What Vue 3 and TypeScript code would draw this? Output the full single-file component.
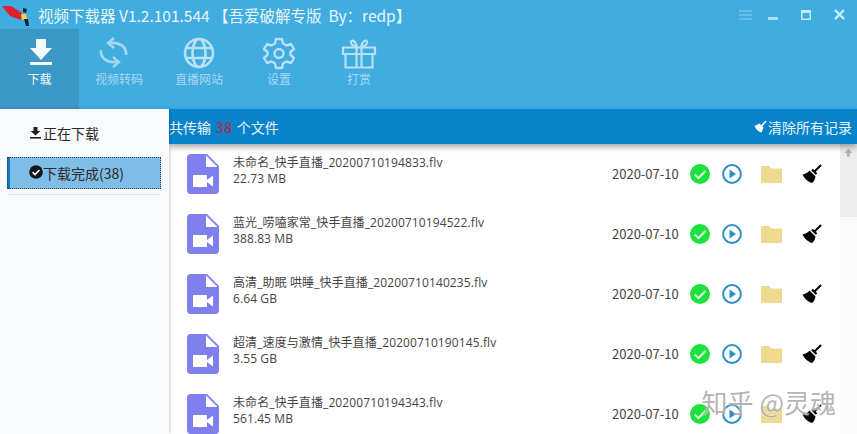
<script setup lang="ts">
interface FileRow {
  name: string;
  size: string;
  date: string;
}

const navItems = [
  { label: '下载', icon: 'download', active: true },
  { label: '视频转码', icon: 'convert', active: false },
  { label: '直播网站', icon: 'globe', active: false },
  { label: '设置', icon: 'gear', active: false },
  { label: '打赏', icon: 'gift', active: false },
];

const files: FileRow[] = [
  { name: '未命名_快手直播_20200710194833.flv', size: '22.73 MB', date: '2020-07-10' },
  { name: '蓝光_唠嗑家常_快手直播_20200710194522.flv', size: '388.83 MB', date: '2020-07-10' },
  { name: '高清_助眠 哄睡_快手直播_20200710140235.flv', size: '6.64 GB', date: '2020-07-10' },
  { name: '超清_速度与激情_快手直播_20200710190145.flv', size: '3.55 GB', date: '2020-07-10' },
  { name: '未命名_快手直播_20200710194343.flv', size: '561.45 MB', date: '2020-07-10' },
];
</script>

<template>
  <div class="app">
    <header class="titlebar">
      <svg class="logo" width="30" height="26" viewBox="0 0 30 26">
        <path d="M1 4 L10 4 L21 11 L20 18 L9 14 Z" fill="#e0202c" />
        <path d="M20 12 L25 12 L26 17 L21 18 Z" fill="#f4d33a" />
        <path d="M23 17 L27 17 L28 24 L25 24 Z" fill="#15213a" />
        <path d="M22 6 L26 7 L25 11 L22 10 Z" fill="#15213a" />
      </svg>
      <span class="title">视频下载器 V1.2.101.544 【吾爱破解专版&nbsp; By：redp】</span>
      <div class="win-btns">
        <svg class="win-menu" width="13" height="10" viewBox="0 0 13 10"><path d="M0 1H13M0 5H13M0 9H13" stroke="#8fd0ec" stroke-width="1.2" /></svg>
        <svg class="win-min" width="10" height="3" viewBox="0 0 10 3"><rect width="10" height="3" fill="#a6e0f5" /></svg>
        <svg width="10" height="10" viewBox="0 0 10 10"><path d="M.75 .75H9.25V9.25H.75Z" fill="none" stroke="#bdf0fb" stroke-width="1.5" /><path d="M0 0H10V3H0Z" fill="#bdf0fb" /></svg>
        <svg width="11" height="11" viewBox="0 0 11 11"><path d="M1 1L10 10M10 1L1 10" stroke="#c7f1fb" stroke-width="2.4" /></svg>
      </div>
    </header>

    <nav class="nav">
      <div v-for="item in navItems" :key="item.label" class="nav-item" :class="{ active: item.active }">
        <svg v-if="item.icon === 'download'" class="nav-icon" width="34" height="34" viewBox="0 0 34 34">
          <path d="M13 2H23V11H29L18 23L7 11H13Z" fill="#f3fafd" />
          <rect x="7" y="25" width="22" height="3" fill="#f3fafd" />
        </svg>
        <svg v-else-if="item.icon === 'convert'" class="nav-icon nav-convert" width="34" height="34" viewBox="0 0 34 34" fill="none" stroke="#a5d8f0" stroke-width="2.6">
          <path d="M14 6C24 5 31 10 30 18" />
          <path d="M18 1L12 6L18 11" stroke-width="2.4" />
          <path d="M21 25C11 26 4 21 5 13" />
          <path d="M17 20L23 25L17 30" stroke-width="2.4" />
        </svg>
        <svg v-else-if="item.icon === 'globe'" class="nav-icon" width="34" height="34" viewBox="0 0 34 34" fill="none" stroke="#b9e0f3" stroke-width="2.6">
          <circle cx="17" cy="16" r="14" />
          <ellipse cx="17" cy="16" rx="6.5" ry="14" />
          <path d="M4 11H30M4 21H30" />
        </svg>
        <svg v-else-if="item.icon === 'gear'" class="nav-icon" width="34" height="34" viewBox="0 0 34 34" fill="none" stroke="#b9e0f3" stroke-width="2.4" stroke-linejoin="round">
          <path d="M14 2H20L21 6.5L24.5 8.5L29 7L32 12L28.5 15V18L32 21L29 26L24.5 24.5L21 26.5L20 31H14L13 26.5L9.5 24.5L5 26L2 21L5.5 18V15L2 12L5 7L9.5 8.5L13 6.5Z" />
          <circle cx="17" cy="16.5" r="4.5" />
        </svg>
        <svg v-else class="nav-icon" width="36" height="34" viewBox="0 0 36 34" fill="none" stroke="#b9e0f3" stroke-width="2.2">
          <path d="M2 10.5H34V17H2Z" />
          <path d="M4.5 17V30.5H31.5V17" />
          <path d="M15.5 10.5V30.5M20.5 10.5V30.5" />
          <path d="M16 10C12 9 9 7 10 4.5C11.5 2 15 5 16 10Z" />
          <path d="M20 10C24 9 27 7 26 4.5C24.5 2 21 5 20 10Z" />
        </svg>
        <span class="nav-label">{{ item.label }}</span>
      </div>
    </nav>

    <div class="body">
      <aside class="sidebar">
        <div class="side-item">
          <svg width="11" height="12" viewBox="0 0 11 12"><path d="M3.5 0H7.5V4H10.5L5.5 8.5L.5 4H3.5Z" fill="#222" /><rect y="10" width="11" height="1.6" fill="#222" /></svg>
          <span>正在下载</span>
        </div>
        <div class="side-item selected">
          <svg class="done-icon" width="14" height="14" viewBox="0 0 14 14"><circle cx="7" cy="7" r="6.8" fill="#16161e" /><path d="M3.6 7.2L6 9.5L10.4 5" fill="none" stroke="#fff" stroke-width="1.6" /></svg>
          <span>下载完成(38)</span>
        </div>
      </aside>

      <main class="main">
        <div class="summary">
          <span class="summary-text">共传输 <b class="count">38</b> 个文件</span>
          <span class="clear-all">
            <svg width="14" height="14" viewBox="0 0 14 14"><path d="M13 1L8.5 6" stroke="#fff" stroke-width="1.6" /><path d="M6.5 3.5L10.5 7.5L8.5 12.5C6 12 2.5 9 1.5 6Z" fill="#fff" /></svg>
            清除所有记录
          </span>
        </div>

        <div class="content">
          <div class="list">
            <div v-for="file in files" :key="file.name" class="row">
              <svg class="file-icon" width="32" height="40" viewBox="0 0 32 40">
                <path d="M4 0H20L32 12V36A4 4 0 0 1 28 40H4A4 4 0 0 1 0 36V4A4 4 0 0 1 4 0Z" fill="#7f80ee" />
                <path d="M19 1.5L30.5 13H19Z" fill="#fff" />
                <path d="M6 21H20V33H6Z" fill="#fff" />
                <path d="M20 26L26 21.5V32.5L20 28Z" fill="#fff" />
              </svg>
              <div class="file-text">
                <div class="file-name">{{ file.name }}</div>
                <div class="file-size">{{ file.size }}</div>
              </div>
              <span class="file-date">{{ file.date }}</span>
              <svg class="act-check" width="20" height="20" viewBox="0 0 20 20">
                <circle cx="10" cy="10" r="10" fill="#1de13c" />
                <path d="M4.5 10.5L8.5 14L15.5 7" fill="none" stroke="#d6f7dc" stroke-width="2.2" />
              </svg>
              <svg class="act-play" width="20" height="20" viewBox="0 0 20 20">
                <circle cx="10" cy="10" r="8.9" fill="#fff" stroke="#2f8fc4" stroke-width="2" />
                <path d="M7.5 5.5L14 10L7.5 14.5Z" fill="#2f8fc4" />
              </svg>
              <svg class="act-folder" width="21" height="17" viewBox="0 0 21 17">
                <path d="M1 0H8L10 2.5H20A1 1 0 0 1 21 3.5V16A1 1 0 0 1 20 17H1A1 1 0 0 1 0 16V1A1 1 0 0 1 1 0Z" fill="#efd98e" />
              </svg>
              <svg class="act-broom" width="20" height="20" viewBox="0 0 20 20">
                <path d="M19 1L12.5 7.5" stroke="#000" stroke-width="2" />
                <path d="M10 5.5L14.5 10" stroke="#000" stroke-width="2.2" />
                <path d="M7.5 6.5L13.5 12.5C13 16 11 18.5 10 19C6 18 2 14 .5 10.5C3 10 6 8.5 7.5 6.5Z" fill="#000" />
              </svg>
            </div>
          </div>
          <div class="scrollbar">
            <div class="thumb">
              <svg width="9" height="9" viewBox="0 0 9 9"><path d="M4.5 0.5L8.5 5H6V8.5H3V5H.5Z" fill="#b4b4b4" /></svg>
            </div>
          </div>
          <div class="watermark">知乎 @灵魂</div>
        </div>
      </main>
    </div>
  </div>
</template>

<style>
html,
body {
  margin: 0;
  overflow: hidden;
}
</style>

<style scoped>
.app {
  width: 857px;
  height: 434px;
  overflow: hidden;
  display: flex;
  flex-direction: column;
  background: #fff;
  font-family: "Noto Sans CJK SC", "Noto Sans", sans-serif;
}

.titlebar {
  height: 29px;
  flex: none;
  display: flex;
  align-items: center;
  padding-left: 1px;
  background: #40ace0;
  color: #e9f6fb;
}

.logo {
  flex: none;
}

.title {
  margin-left: 7px;
  font-size: 15.5px;
  white-space: nowrap;
}

.win-btns {
  margin-left: auto;
  display: flex;
  align-items: center;
  gap: 23px;
  padding-right: 12px;
}

.win-menu {
  margin-right: -7px;
}

.win-min {
  margin-top: 7px;
}

.nav {
  height: 80px;
  flex: none;
  display: flex;
  background: #40ace0;
}

.nav-item {
  width: 80px;
  display: flex;
  flex-direction: column;
  align-items: center;
  padding-top: 8px;
  color: #a9d9f1;
  font-size: 12px;
  box-sizing: border-box;
}

.nav-item.active {
  width: 79px;
  background: #3a97c6;
  color: #f3fafd;
}

.nav-icon {
  display: block;
}

.nav-convert {
  margin-right: 12px;
}

.nav-label {
  margin-top: -1px;
  line-height: 18px;
  white-space: nowrap;
}

.body {
  flex: 1;
  min-height: 0;
  display: flex;
}

.sidebar {
  width: 169px;
  flex: none;
  background: #f9fafc;
  box-shadow: 1px 0 3px rgba(0, 0, 0, 0.2);
  position: relative;
  z-index: 2;
  font-size: 14px;
  color: #2a2a2a;
  padding-top: 12px;
  box-sizing: border-box;
}

.side-item {
  display: flex;
  align-items: center;
  gap: 2px;
  height: 24px;
  padding-left: 30px;
  white-space: nowrap;
}

.side-item.selected {
  box-sizing: border-box;
  width: 154px;
  height: 32px;
  margin: 12px 0 0 7px;
  padding-left: 19px;
  gap: 0;
  background: #7fbde6;
  border-left: 3px solid #0a78c8;
  outline: 1px dotted #24435c;
  outline-offset: -1px;
  box-shadow: 0 5px 0 #f9fafc, 0 6px 0 #e2e4e8;
}

.done-icon {
  margin-top: -3px;
}

.main {
  flex: 1;
  min-width: 0;
  display: flex;
  flex-direction: column;
}

.summary {
  height: 35px;
  flex: none;
  display: flex;
  align-items: center;
  justify-content: space-between;
  padding-right: 5px;
  background: #0683cb;
  color: #ecf7fc;
  font-size: 14px;
  box-shadow: 0 3px 6px rgba(0, 0, 0, 0.35);
  position: relative;
  z-index: 1;
}

.summary-text {
  word-spacing: 1.5px;
}

.count {
  font-weight: 700;
  color: #8c3a68;
}

.clear-all {
  display: flex;
  align-items: center;
  gap: 1px;
}

.content {
  flex: 1;
  min-height: 0;
  display: flex;
  position: relative;
}

.list {
  flex: 1;
  min-width: 0;
}

.row {
  height: 60px;
  display: flex;
  align-items: center;
  padding-left: 18px;
  box-sizing: border-box;
}

.file-icon {
  flex: none;
}

.file-text {
  width: 379px;
  margin-left: 14px;
  font-family: "Open Sans", "Noto Sans CJK SC", sans-serif;
  font-size: 12px;
  letter-spacing: 0.1px;
  line-height: 16px;
  color: #444;
  white-space: nowrap;
  margin-top: -7px;
}

.file-date {
  font-size: 13px;
  color: #444;
  width: 76px;
  white-space: nowrap;
  margin-top: -1px;
}

.act-check,
.act-play,
.act-folder,
.act-broom {
  flex: none;
}

.act-check {
  margin-left: 2px;
}

.act-play {
  margin-left: 12px;
}

.act-folder {
  margin-left: 19px;
}

.act-broom {
  margin-left: 20px;
}

.scrollbar {
  width: 17px;
  flex: none;
  background: #fafafa;
}

.thumb {
  height: 73px;
  padding-top: 4px;
  box-sizing: border-box;
  display: flex;
  justify-content: center;
  align-items: flex-start;
  background: #ececec;
}

.watermark {
  position: absolute;
  right: 21px;
  bottom: 16px;
  font-size: 26px;
  line-height: 32px;
  color: rgba(165, 165, 165, 0.85);
  text-shadow: 0 0 2px #fff;
  white-space: nowrap;
  pointer-events: none;
}
</style>
